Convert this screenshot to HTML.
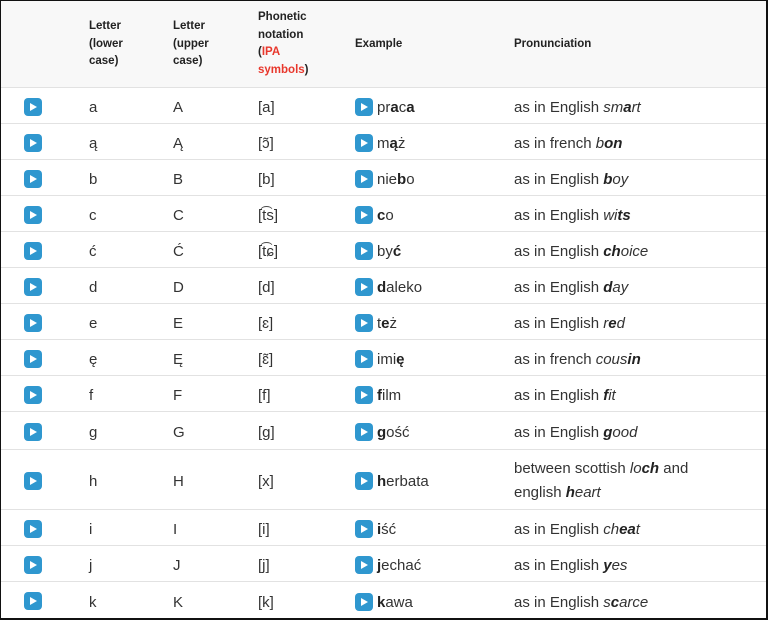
<!DOCTYPE html>
<html><head><meta charset="utf-8"><style>
*{margin:0;padding:0;box-sizing:border-box}
body{width:768px;height:620px;overflow:hidden;background:#fff;font-family:"Liberation Sans","DejaVu Sans",sans-serif;color:#333;position:relative}
.frame{position:absolute;left:0;top:0;width:768px;height:620px;border:1px solid #111;border-bottom:2px solid #111;border-right:2px solid #111;z-index:5;pointer-events:none}
.head{position:absolute;left:0;top:0;width:768px;height:88px;background:#f8f8f8;border-bottom:1px solid #e2e2e2}
.h{position:absolute;font-size:11.5px;font-weight:bold;line-height:17.5px;color:#222}
.red{color:#e8372c}
.row{position:absolute;left:0;width:768px;border-bottom:1px solid #e2e2e2;font-size:15px}
.row div{position:absolute;top:0;height:100%;display:flex;align-items:center;white-space:nowrap;padding-top:4px}
.row div.c0{padding-top:2px}
.ic{display:inline-block;width:18px;height:18px;border-radius:4px;background:#2f97cf;position:relative;flex:none}
.ic:after{content:"";position:absolute;left:6px;top:5px;border-left:7px solid #fff;border-top:4px solid transparent;border-bottom:4px solid transparent}
.c4 .ic{margin-right:4px;margin-top:-1px}
.c0{left:24px}.c1{left:89px}.c2{left:173px}.c3{left:258px}.c4{left:355px}.c5{left:514px}
b{font-weight:bold;color:#222}
i b{font-style:italic}
</style></head><body>
<div class="head">
<div class="h" style="left:89px;top:18px">Letter<br>(lower<br>case)</div>
<div class="h" style="left:173px;top:18px">Letter<br>(upper<br>case)</div>
<div class="h" style="left:258px;top:9px">Phonetic<br>notation<br>(<span class="red">IPA<br>symbols</span>)</div>
<div class="h" style="left:355px;top:36px">Example</div>
<div class="h" style="left:514px;top:36px">Pronunciation</div>
</div>

<div class="row" style="top:88px;height:36px"><div class="c0"><span class="ic"></span></div><div class="c1">a</div><div class="c2">A</div><div class="c3">[a]</div><div class="c4"><span class="ic"></span>pr<b>a</b>c<b>a</b></div><div class="c5">as in English&nbsp;<i>sm<b>a</b>rt</i></div></div>
<div class="row" style="top:124px;height:36px"><div class="c0"><span class="ic"></span></div><div class="c1">ą</div><div class="c2">Ą</div><div class="c3">[ɔ̃]</div><div class="c4"><span class="ic"></span>m<b>ą</b>ż</div><div class="c5">as in french&nbsp;<i>b<b>on</b></i></div></div>
<div class="row" style="top:160px;height:36px"><div class="c0"><span class="ic"></span></div><div class="c1">b</div><div class="c2">B</div><div class="c3">[b]</div><div class="c4"><span class="ic"></span>nie<b>b</b>o</div><div class="c5">as in English&nbsp;<i><b>b</b>oy</i></div></div>
<div class="row" style="top:196px;height:36px"><div class="c0"><span class="ic"></span></div><div class="c1">c</div><div class="c2">C</div><div class="c3">[t͡s]</div><div class="c4"><span class="ic"></span><b>c</b>o</div><div class="c5">as in English&nbsp;<i>wi<b>ts</b></i></div></div>
<div class="row" style="top:232px;height:36px"><div class="c0"><span class="ic"></span></div><div class="c1">ć</div><div class="c2">Ć</div><div class="c3">[t͡ɕ]</div><div class="c4"><span class="ic"></span>by<b>ć</b></div><div class="c5">as in English&nbsp;<i><b>ch</b>oice</i></div></div>
<div class="row" style="top:268px;height:36px"><div class="c0"><span class="ic"></span></div><div class="c1">d</div><div class="c2">D</div><div class="c3">[d]</div><div class="c4"><span class="ic"></span><b>d</b>aleko</div><div class="c5">as in English&nbsp;<i><b>d</b>ay</i></div></div>
<div class="row" style="top:304px;height:36px"><div class="c0"><span class="ic"></span></div><div class="c1">e</div><div class="c2">E</div><div class="c3">[ɛ]</div><div class="c4"><span class="ic"></span>t<b>e</b>ż</div><div class="c5">as in English&nbsp;<i>r<b>e</b>d</i></div></div>
<div class="row" style="top:340px;height:36px"><div class="c0"><span class="ic"></span></div><div class="c1">ę</div><div class="c2">Ę</div><div class="c3">[ɛ̃]</div><div class="c4"><span class="ic"></span>imi<b>ę</b></div><div class="c5">as in french&nbsp;<i>cous<b>in</b></i></div></div>
<div class="row" style="top:376px;height:36px"><div class="c0"><span class="ic"></span></div><div class="c1">f</div><div class="c2">F</div><div class="c3">[f]</div><div class="c4"><span class="ic"></span><b>f</b>ilm</div><div class="c5">as in English&nbsp;<i><b>f</b>it</i></div></div>
<div class="row" style="top:412px;height:38px"><div class="c0"><span class="ic"></span></div><div class="c1">g</div><div class="c2">G</div><div class="c3">[g]</div><div class="c4"><span class="ic"></span><b>g</b>ość</div><div class="c5">as in English&nbsp;<i><b>g</b>ood</i></div></div>
<div class="row" style="top:450px;height:60px"><div class="c0"><span class="ic"></span></div><div class="c1">h</div><div class="c2">H</div><div class="c3">[x]</div><div class="c4"><span class="ic"></span><b>h</b>erbata</div><div class="c5" style="white-space:normal;line-height:24px;display:block;top:7px;height:auto;padding-top:0">between scottish <i>lo<b>ch</b></i> and<br>english <i><b>h</b>eart</i></div></div>
<div class="row" style="top:510px;height:36px"><div class="c0"><span class="ic"></span></div><div class="c1">i</div><div class="c2">I</div><div class="c3">[i]</div><div class="c4"><span class="ic"></span><b>i</b>ść</div><div class="c5">as in English&nbsp;<i>ch<b>ea</b>t</i></div></div>
<div class="row" style="top:546px;height:36px"><div class="c0"><span class="ic"></span></div><div class="c1">j</div><div class="c2">J</div><div class="c3">[j]</div><div class="c4"><span class="ic"></span><b>j</b>echać</div><div class="c5">as in English&nbsp;<i><b>y</b>es</i></div></div>
<div class="row" style="top:582px;height:36px;border-bottom:none"><div class="c0"><span class="ic"></span></div><div class="c1">k</div><div class="c2">K</div><div class="c3">[k]</div><div class="c4"><span class="ic"></span><b>k</b>awa</div><div class="c5">as in English&nbsp;<i>s<b>c</b>arce</i></div></div>
<div class="frame"></div>
</body></html>
